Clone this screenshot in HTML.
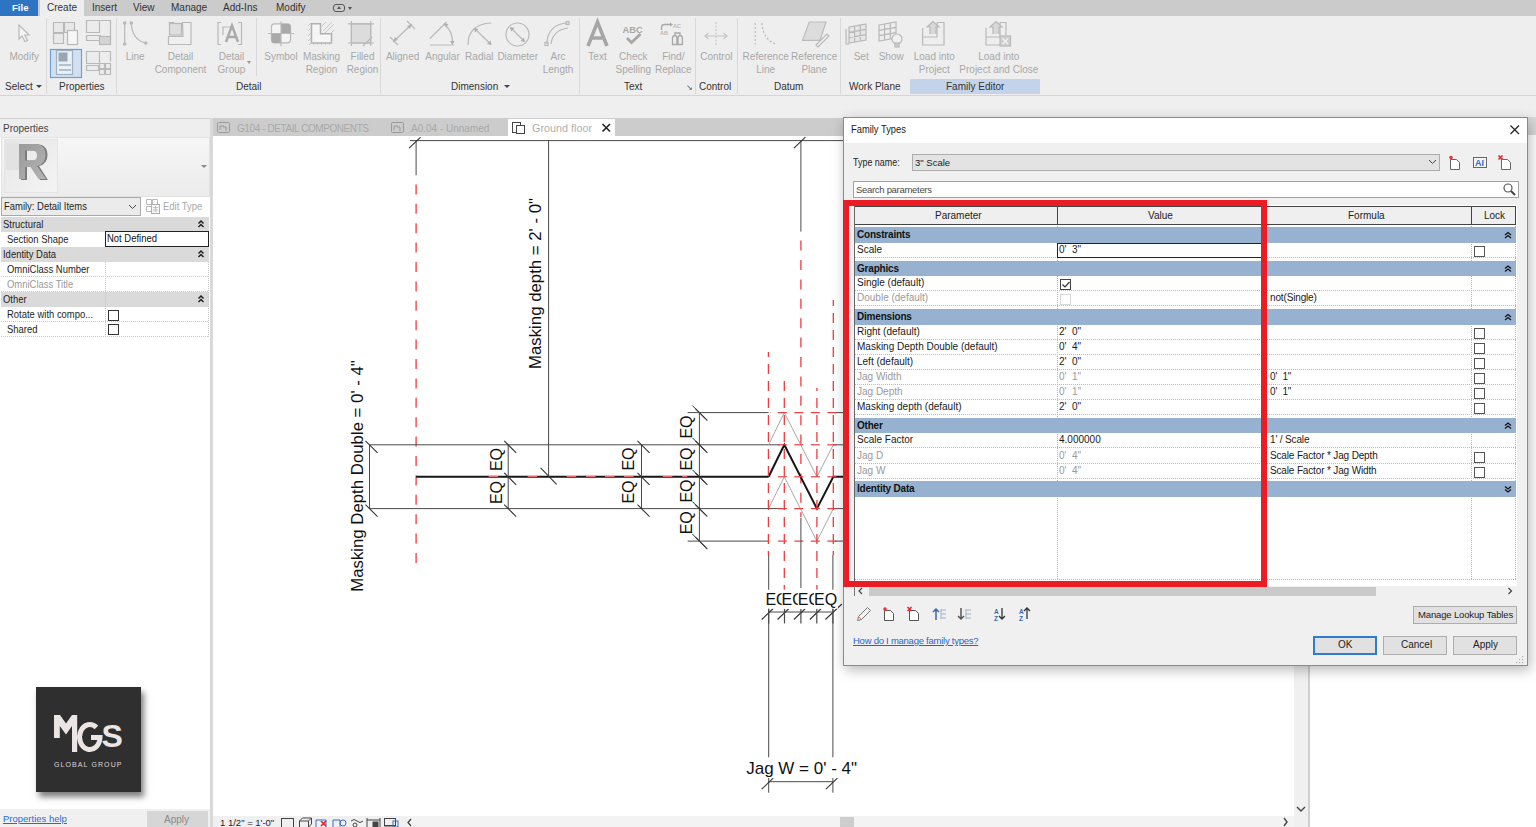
<!DOCTYPE html>
<html><head><meta charset="utf-8">
<style>
*{box-sizing:border-box;margin:0;padding:0}
html,body{width:1536px;height:827px;overflow:hidden;background:#fff;font-family:"Liberation Sans",sans-serif;position:relative}
.a{position:absolute}
.t{position:absolute;white-space:pre;line-height:12px}
.tab{position:absolute;top:2px;font-size:10px;color:#333;white-space:nowrap;line-height:12px}
.rl{position:absolute;font-size:10px;color:#a8a8a8;white-space:nowrap;line-height:12px;text-align:center}
.gl{position:absolute;font-size:10px;color:#333;white-space:nowrap;line-height:12px;top:81px}
svg{position:absolute;overflow:visible}
.pr{position:absolute;left:1px;width:208px;height:15px;font-size:10.8px;line-height:14px;color:#1e1e1e;white-space:nowrap}
.n{display:inline-block;transform:scaleX(.875);transform-origin:0 50%}
.ph{position:absolute;left:1px;width:208px;height:15px;background:#dadada;font-size:10.8px;line-height:14px;color:#1e1e1e;padding-left:2px}
.dh{position:absolute;left:855px;width:661px;height:16px;background:#97b1d0;font-size:10px;font-weight:bold;line-height:15px;color:#111;padding-left:2px;letter-spacing:-0.2px}
.dr{position:absolute;left:855px;width:661px;height:15px;font-size:10px;line-height:14px;color:#1a1a1a;white-space:nowrap;background:repeating-linear-gradient(90deg,#bcbcbc 0 1px,transparent 1px 2px) bottom/100% 1px no-repeat}
.dr span{position:absolute;top:0}
.g{color:#9a9a9a}
.cb{position:absolute;width:11px;height:11px;border:1px solid #555;background:#fff}
.chev{position:absolute;font-size:8px;line-height:8px}
</style></head><body>

<!-- top tab bar -->
<div class="a" style="left:0;top:0;width:1536px;height:16px;background:#cbcbcb"></div>
<div class="a" style="left:0;top:0;width:38px;height:16px;background:#2d74c2"></div>
<div class="tab" style="left:12px;color:#fff;font-weight:bold;font-size:9.6px">File</div>
<div class="a" style="left:40px;top:0;width:44px;height:16px;background:#eeeeee"></div>
<div class="tab" style="left:47px">Create</div>
<div class="tab" style="left:92px">Insert</div>
<div class="tab" style="left:133px">View</div>
<div class="tab" style="left:171px">Manage</div>
<div class="tab" style="left:223px">Add-Ins</div>
<div class="tab" style="left:276px">Modify</div>
<div class="a" style="left:333px;top:4px;width:12px;height:8px;border:1px solid #555;border-radius:3px"></div>
<div class="a" style="left:337px;top:6px;width:0;height:0;border-left:2px solid transparent;border-right:2px solid transparent;border-bottom:3px solid #555"></div>
<div class="a" style="left:348px;top:7px;width:0;height:0;border-left:2px solid transparent;border-right:2px solid transparent;border-top:3px solid #555"></div>
<!-- ribbon -->
<div class="a" style="left:0;top:16px;width:1536px;height:80px;background:#eeeeee;border-bottom:1px solid #d5d5d5"></div>
<div class="a" style="left:0;top:96px;width:1536px;height:22px;background:#efefef"></div>

<div class="rl" style="left:-35.8px;width:120px;top:51.0px">Modify</div>
<div class="rl" style="left:75.2px;width:120px;top:51.0px">Line</div>
<div class="rl" style="left:120.5px;width:120px;top:51.0px">Detail</div>
<div class="rl" style="left:120.5px;width:120px;top:63.5px">Component</div>
<div class="rl" style="left:171.5px;width:120px;top:51.0px">Detail</div>
<div class="rl" style="left:171.5px;width:120px;top:63.5px">Group</div>
<div class="rl" style="left:221.0px;width:120px;top:51.0px">Symbol</div>
<div class="rl" style="left:261.5px;width:120px;top:51.0px">Masking</div>
<div class="rl" style="left:261.5px;width:120px;top:63.5px">Region</div>
<div class="rl" style="left:302.5px;width:120px;top:51.0px">Filled</div>
<div class="rl" style="left:302.5px;width:120px;top:63.5px">Region</div>
<div class="rl" style="left:342.6px;width:120px;top:51.0px">Aligned</div>
<div class="rl" style="left:382.5px;width:120px;top:51.0px">Angular</div>
<div class="rl" style="left:419.3px;width:120px;top:51.0px">Radial</div>
<div class="rl" style="left:457.7px;width:120px;top:51.0px">Diameter</div>
<div class="rl" style="left:498.0px;width:120px;top:51.0px">Arc</div>
<div class="rl" style="left:498.0px;width:120px;top:63.5px">Length</div>
<div class="rl" style="left:537.5px;width:120px;top:51.0px">Text</div>
<div class="rl" style="left:573.3px;width:120px;top:51.0px">Check</div>
<div class="rl" style="left:573.3px;width:120px;top:63.5px">Spelling</div>
<div class="rl" style="left:613.3px;width:120px;top:51.0px">Find/</div>
<div class="rl" style="left:613.3px;width:120px;top:63.5px">Replace</div>
<div class="rl" style="left:656.3px;width:120px;top:51.0px">Control</div>
<div class="rl" style="left:705.7px;width:120px;top:51.0px">Reference</div>
<div class="rl" style="left:705.7px;width:120px;top:63.5px">Line</div>
<div class="rl" style="left:754.2px;width:120px;top:51.0px">Reference</div>
<div class="rl" style="left:754.2px;width:120px;top:63.5px">Plane</div>
<div class="rl" style="left:801.2px;width:120px;top:51.0px">Set</div>
<div class="rl" style="left:831.2px;width:120px;top:51.0px">Show</div>
<div class="rl" style="left:874.3px;width:120px;top:51.0px">Load into</div>
<div class="rl" style="left:874.3px;width:120px;top:63.5px">Project</div>
<div class="rl" style="left:938.8px;width:120px;top:51.0px">Load into</div>
<div class="rl" style="left:938.8px;width:120px;top:63.5px">Project and Close</div>
<svg style="left:0;top:0" width="1536" height="100" viewBox="0 0 1536 100">
<g fill="none" stroke="#b9b9b9" stroke-width="1.2">
<!-- separators -->
<g stroke="#d8d8d8" stroke-width="1"><line x1="46.5" y1="18" x2="46.5" y2="94"/><line x1="116.5" y1="18" x2="116.5" y2="94"/><line x1="256.5" y1="18" x2="256.5" y2="76"/><line x1="380.5" y1="18" x2="380.5" y2="94"/><line x1="579.5" y1="18" x2="579.5" y2="94"/><line x1="695.5" y1="18" x2="695.5" y2="94"/><line x1="737.5" y1="18" x2="737.5" y2="94"/><line x1="840.5" y1="18" x2="840.5" y2="94"/></g>
<!-- modify cursor -->
<path d="M19 25 L19 39 L22 36 L25 41.5 L27.5 40.5 L24.8 35 L29 35 Z" fill="#f4f4f4"/>
<!-- properties icons -->
<rect x="50.5" y="49.5" width="31" height="28" fill="#d2e0f2" stroke="#6e9fd8"/>
<rect x="56.5" y="50.5" width="16" height="24" fill="#e8f0f8" stroke="#9fb0c0"/>
<rect x="58.5" y="52.5" width="9" height="9" fill="#9aa6b2" stroke="none"/>
<path d="M59 65 H71 M59 70 H71" stroke="#8090a0"/>
<path d="M53.5 22.5 h10 v10 h-10z M64.5 22.5 h10 v10 h-10z M53.5 33.5 h10 v10 h-10z" fill="#e8e8e8"/>
<rect x="67.5" y="30.5" width="10" height="14" fill="#f6f6f6"/>
<path d="M86.5 20.5 h13 v12 h-13z M100.5 20.5 h10 v18 M86.5 35.5 h14 v5 h-14z" fill="#ececec"/>
<rect x="99.5" y="36.5" width="11" height="8" fill="#d4d4d4"/>
<path d="M86.5 51.5 h13 v12 h-13z M100.5 51.5 h10 v10 M86.5 65.5 h12 v5 h-12z" fill="#ececec"/>
<path d="M99.5 63.5 h5 v5 h-5z M105.5 63.5 h5 v5 h-5z M99.5 69.5 h5 v5 h-5z M105.5 69.5 h5 v5 h-5z" fill="#ececec"/>
<!-- line -->
<line x1="124.7" y1="23" x2="124.7" y2="44"/>
<circle cx="124.7" cy="23" r="1.2" fill="#b9b9b9"/><circle cx="124.7" cy="44" r="1.2" fill="#b9b9b9"/>
<path d="M131.3 23 Q132 40 145.8 43"/><circle cx="131.3" cy="23" r="1.2" fill="#b9b9b9"/><circle cx="145.8" cy="43" r="1.2" fill="#b9b9b9"/>
<!-- detail component -->
<path d="M168.5 22.5 h6 M182.5 22.5 h8.5 v22 h-22.5 v-8 h14.5 z" fill="#f0f0f0"/>
<rect x="169.5" y="23.5" width="12" height="11.5" fill="#dedede"/>
<!-- detail group -->
<path d="M221 22.5 h-3 v22 h3 M238 22.5 h3.5 v22 h-3.5 M223 35 v-8 h8 v3"/>
<path d="M226 42 L232 25.5 L238 42 M228 37 h8" stroke="#aaaaaa" stroke-width="2.4"/>
<!-- symbol -->
<rect x="271.5" y="23.8" width="19" height="19" rx="3" fill="#f4f4f4"/>
<path d="M281 24 h7 a2.5 2.5 0 0 1 2.5 2.5 v7 h-9.5z M271.5 33.5 h9.5 v9.5 h-7 a2.5 2.5 0 0 1 -2.5 -2.5z" fill="#a9a9a9" stroke="none"/>
<path d="M268 33.5 H294 M281 21.5 V46"/>
<!-- masking region -->
<path d="M311.5 23.8 h9 v10 h11 v9.2 h-20 z" fill="#f6f6f6" stroke="#b0b0b0" stroke-width="1.5"/>
<path d="M309 45 l3 -3 M313 45 l3 -3 M317 45 l3 -3 M321 45 l3 -3 M325 45 l3 -3 M329 45 l3 -3 M308 41 l3 -3 M308 36 l3 -3 M308 31 l3 -3 M308 26 l3 -3 M323 31 l9 -9 M325 33 l9 -9 M330 34 l4 -4 M322 26 l4 -4" stroke="#c4c4c4" stroke-width="0.9"/>
<!-- filled region -->
<rect x="351.4" y="23.8" width="19.3" height="19.2" fill="#dcdcdc"/>
<path d="M348 23.8 H374 M348 43 H374 M351.4 21 V46 M370.7 21 V46 M363 46 L372 37"/>
<!-- aligned -->
<path d="M393 42 L412 24 M390 37 L398 45 M407 21 L415 29"/>
<path d="M393.5 41.5 l1.5 -4.5 l3 3 z M411.5 24.5 l-1.5 4.5 l-3 -3 z" fill="#b0b0b0" stroke="none"/>
<!-- angular -->
<path d="M430 38.5 L446.5 22 M430 45 H454.3 M444.5 24.5 Q453.5 32 452.5 44"/>
<path d="M444 23.5 l4.5 0.5 l-2.5 3.5 z M452.5 45 l-2.5 -4 l4.5 0 z" fill="#b0b0b0" stroke="none"/>
<!-- radial -->
<path d="M468 45 Q468 24 491.2 23 M474.5 28.5 L491 44.5"/>
<path d="M474 28 l4.5 1 l-3.5 3.5 z M491.5 45 l-4.5 -1 l3.5 -3.5 z" fill="#b0b0b0" stroke="none"/>
<!-- diameter -->
<circle cx="517.5" cy="34.5" r="11.5"/><path d="M510.5 27.5 L524.5 41.5"/>
<path d="M510 27 l4.5 1 l-3.5 3.5 z M525 42 l-4.5 -1 l3.5 -3.5 z" fill="#b0b0b0" stroke="none"/>
<!-- arc length -->
<path d="M546.7 43.9 Q548 24 567.4 23 M551 44 Q553 30 568 28"/><rect x="566" y="21.5" width="3" height="3"/><rect x="545" y="42.5" width="3" height="3"/>
<!-- text A -->
<path d="M588 46 L597.5 22 L607 46 M591.5 38 H603.5" stroke="#a6a6a6" stroke-width="3.5"/>
<!-- check spelling -->
<text x="622.5" y="32.5" font-size="9.3" font-weight="bold" fill="#a8a8a8" stroke="none" font-family="Liberation Sans">ABC</text>
<path d="M627 38 L631.5 42.5 L640.5 34" stroke="#a8a8a8" stroke-width="2.8"/>
<!-- find replace -->
<path d="M661.5 30 v-2.5 q0 -3 3 -3 h6" stroke="#a8a8a8" stroke-width="1.3"/><path d="M670 22.5 l3 2 l-3 2 z" fill="#a8a8a8" stroke="none"/>
<text x="673" y="27.5" font-size="5.5" font-weight="bold" fill="#b8b8b8" stroke="none" font-family="Liberation Sans">AC</text>
<text x="660" y="35" font-size="5.5" font-weight="bold" fill="#b8b8b8" stroke="none" font-family="Liberation Sans">AB</text>
<path d="M672.5 44.5 v-6 q0 -3 2.2 -3 q2.2 0 2.2 3 v6 z M678 44.5 v-6 q0 -3 2.2 -3 q2.2 0 2.2 3 v6 z M675 35 v-2 h5 v2" fill="#eeeeee" stroke="#a8a8a8" stroke-width="1.3"/>
<!-- control -->
<path d="M716 22 V46" stroke="#c8c8c8" stroke-dasharray="2 1.5"/>
<path d="M705 36 H727 M723.5 33 L727 36 L723.5 39 M708.5 33 L705 36 L708.5 39" stroke="#c4c4c4" stroke-width="1.1"/>
<!-- ref line -->
<path d="M755.2 23 V44.3 M761.9 23 Q763 40 776.1 43.9" stroke-dasharray="2 2"/>
<!-- ref plane -->
<path d="M809.3 22 L826 22 L820 40.4 L802.5 40.4 Z" fill="#dcdcdc" stroke="#bcbcbc"/>
<path d="M816 45 L827 34 L829 36 L818 47 Z" fill="#f2f2f2"/>
<!-- set -->
<path d="M849 27 L866 24 V40 L849 43 Z M849 32.3 L866 29.3 M849 37.6 L866 34.6 M854.6 26 V42 M860.3 25 V41 M846 29 V44 h3" fill="#e6e6e6"/>
<!-- show -->
<path d="M879 25 L896 22 V38 L879 41 Z M879 30.3 L896 27.3 M879 35.6 L896 32.6 M884.6 24 V40 M890.3 23 V39" fill="#ececec"/>
<circle cx="897" cy="39" r="5" fill="#f0f0f0"/><rect x="895" y="43" width="4" height="4" fill="#cccccc"/>
<!-- load into project -->
<path d="M922.6 28 V45 H944 V22.5 H937" fill="none"/><path d="M930 34 V27 H927 L933 21.5 L939 27 H936 V34" fill="#d8d8d8"/><path d="M922.6 37 H937 V22.5"/>
<!-- load and close -->
<path d="M986 28 V45 H1000 M1006 22.5 V36 M986 37 H1000 V22.5 H1006" fill="none"/><path d="M993 34 V27 H990 L996 21.5 L1002 27 H999 V34" fill="#d8d8d8"/>
<rect x="1000" y="36" width="10.5" height="10" fill="#cfcfcf" stroke="#bbbbbb"/><path d="M1002.5 38.5 l5.5 5.5 M1008 38.5 l-5.5 5.5" stroke="#f4f4f4"/>
</g>
</svg>

<div class="gl" style="left:5px">Select</div>
<div class="a" style="left:36px;top:85px;border-left:3px solid transparent;border-right:3px solid transparent;border-top:3px solid #444"></div>
<div class="gl" style="left:59px">Properties</div>
<div class="gl" style="left:236px">Detail</div>
<div class="a" style="left:247px;top:61px;border-left:2.5px solid transparent;border-right:2.5px solid transparent;border-top:3px solid #999"></div>
<div class="gl" style="left:451px">Dimension</div>
<div class="a" style="left:504px;top:85px;border-left:3px solid transparent;border-right:3px solid transparent;border-top:3px solid #444"></div>
<div class="gl" style="left:624px">Text</div>
<div class="t" style="left:686px;top:82px;font-size:8px;color:#555">&#8600;</div>
<div class="gl" style="left:699px">Control</div>
<div class="gl" style="left:774px">Datum</div>
<div class="gl" style="left:849px">Work Plane</div>
<div class="a" style="left:910px;top:79px;width:130px;height:15px;background:#c5d3ea"></div>
<div class="gl" style="left:946px">Family Editor</div>

<!-- properties panel -->
<div class="a" style="left:0;top:118px;width:211px;height:709px;background:#fff"></div>
<div class="a" style="left:0;top:118px;width:211px;height:1px;background:#cfcfcf"></div>
<div class="a" style="left:0;top:119px;width:211px;height:18px;background:#eeeeee"></div>
<div class="t" style="left:3px;top:123px;font-size:10px;color:#444">Properties</div>
<div class="a" style="left:1px;top:137px;width:209px;height:60px;background:linear-gradient(#f6f6f6,#ececec);border:1px solid #e2e2e2"></div>
<div class="a" style="left:4px;top:139px;width:54px;height:54px;background:linear-gradient(135deg,#e6e6e6,#f4f4f4);border:1px solid #e4e4e4"></div>
<svg style="left:0;top:0" width="60" height="200">
<defs><linearGradient id="rg" x1="0" y1="0" x2="1" y2="1"><stop offset="0" stop-color="#9a9a9a"/><stop offset="1" stop-color="#b4b4b4"/></linearGradient></defs>
<rect x="6" y="143" width="14" height="27" fill="#e2e2e2"/>
<path d="M21 180 V144 H35 Q47.5 144 47.5 155 Q47.5 164 39 166 L48 180 H40 L32 167 H27 V180 Z M27 150.5 V160.5 H34 Q39 160.5 39 155.5 Q39 150.5 34 150.5 Z" fill="#7c7c7c" fill-rule="evenodd"/>
<path d="M19 179 V144 H34 Q45.5 144 45.5 155 Q45.5 164 37 166 L46 179 H38.5 L30.5 167 H25 V179 Z M25 150.5 V160.5 H32 Q37 160.5 37 155.5 Q37 150.5 32 150.5 Z" fill="url(#rg)" fill-rule="evenodd"/>
</svg>
<div class="a" style="left:201px;top:165px;border-left:3px solid transparent;border-right:3px solid transparent;border-top:3px solid #888"></div>
<div class="a" style="left:1px;top:197px;width:140px;height:19px;background:#ebebeb;border:1px solid #a9a9a9"></div>
<div class="t" style="left:4px;top:200px;font-size:10.8px;color:#1e1e1e"><span class="n">Family: Detail Items</span></div>
<svg style="left:0;top:0" width="211" height="230"><path d="M129 205 L132.5 208.5 L136 205" fill="none" stroke="#444" stroke-width="1"/>
<path d="M146.5 199.5 h5 v5 h-5z M146.5 206.5 h5 v5 h-5z M152.5 199.5 h5 v5 h-5z" fill="none" stroke="#b8b8b8"/><rect x="151.5" y="204.5" width="8" height="9" fill="#f4f4f4" stroke="#b0b0b0"/><path d="M153 207.5 h5 M153 210 h5 M155.5 206 v6" stroke="#c0c0c0"/></svg>
<div class="t" style="left:163px;top:200px;font-size:10.8px;color:#a8a8a8"><span class="n">Edit Type</span></div>
<div class="ph" style="top:217px"><span class="n">Structural</span></div>
<div class="pr" style="top:232px"><span class="n" style="position:absolute;left:6px">Section Shape</span></div>
<div class="a" style="left:105px;top:231px;width:104px;height:16px;border:1px solid #222;background:#fff"></div>
<div class="t" style="left:107px;top:232px;font-size:10.8px;color:#111"><span class="n">Not Defined</span></div>
<div class="ph" style="top:247px"><span class="n">Identity Data</span></div>
<div class="pr" style="top:262px"><span class="n" style="position:absolute;left:6px">OmniClass Number</span></div>
<div class="pr" style="top:277px;color:#999"><span class="n" style="position:absolute;left:6px">OmniClass Title</span></div>
<div class="ph" style="top:292px"><span class="n">Other</span></div>
<div class="pr" style="top:307px"><span class="n" style="position:absolute;left:6px">Rotate with compo...</span></div>
<div class="pr" style="top:322px"><span class="n" style="position:absolute;left:6px">Shared</span></div>
<svg style="left:0;top:0" width="211" height="340">
<g fill="none" stroke="#c8c8c8" stroke-dasharray="1 1">
<path d="M105.5 262 V337 M208.5 262 V337 M1 276.5 H209 M1 291.5 H209 M1 321.5 H209 M1 336.5 H209"/>
</g>
<rect x="108.5" y="310.5" width="10" height="10" fill="#fff" stroke="#333"/>
<rect x="108.5" y="324.5" width="10" height="10" fill="#fff" stroke="#333"/>
<g fill="none" stroke="#222" stroke-width="1.5"><path d="M198.5 223.5 L201 221 L203.5 223.5 M198.5 227 L201 224.5 L203.5 227 M198.5 253.5 L201 251 L203.5 253.5 M198.5 257 L201 254.5 L203.5 257 M198.5 298.5 L201 296 L203.5 298.5 M198.5 302 L201 299.5 L203.5 302"/></g>
</svg>
<!-- panel separator -->
<div class="a" style="left:210px;top:118px;width:3px;height:709px;background:#d9d9d9"></div>
<!-- MGS logo -->
<div class="a" style="left:36px;top:687px;width:105px;height:105px;background:#2f2f2f;box-shadow:3px 5px 6px rgba(0,0,0,0.5)"></div>
<svg style="left:0;top:0" width="211" height="827">
<path d="M54 715 L60 715 L66 723.5 L72 715 L77.2 715 L77.2 752 L72 752 L72 726 L66 734.5 L59.8 726 L59.8 738 L54 738 Z" fill="#ebe5e3"/>
<path d="M96.4 727.5 A 10.2 12.5 0 1 0 100 737.5 H 91" fill="none" stroke="#ebe5e3" stroke-width="5"/>
<text x="101.5" y="746.8" font-family="Liberation Sans" font-weight="bold" font-size="32" fill="#ebe5e3">S</text>
<text x="54" y="767" font-family="Liberation Sans" font-size="7" fill="#ddd6d4" letter-spacing="1.1">GLOBAL GROUP</text>
</svg>
<!-- bottom bar -->
<div class="a" style="left:0;top:809px;width:210px;height:18px;background:#f0f0f0"></div>
<div class="t" style="left:3px;top:813px;font-size:9.5px;color:#1a6fd0;text-decoration:underline">Properties help</div>
<div class="a" style="left:147px;top:811px;width:61px;height:16px;background:#d6d6d6"></div>
<div class="t" style="left:164px;top:814px;font-size:10px;color:#8a8a8a">Apply</div>

<!-- canvas -->
<div class="a" style="left:213px;top:118px;width:1097px;height:18px;background:#cccccc"></div>
<div class="a" style="left:508px;top:119px;width:107px;height:17px;background:#fff"></div>
<div class="t" style="left:237px;top:123px;font-size:10px;color:#a9a9a9;letter-spacing:-0.42px">G104 - DETAIL COMPONENTS</div>
<div class="t" style="left:411px;top:123px;font-size:10px;color:#a9a9a9">A0.04 - Unnamed</div>
<div class="t" style="left:532px;top:122px;font-size:10.8px;color:#b0b0b0">Ground floor</div>
<svg style="left:0;top:0" width="1536" height="827">
<g fill="none" stroke="#9a9a9a" stroke-width="1">
<rect x="217.5" y="122.5" width="12" height="10" rx="1"/><path d="M220 130 v-4 h4 M223 127 h3 v4"/>
<rect x="391.5" y="122.5" width="12" height="10" rx="1"/><path d="M394 130 v-4 h4 M397 127 h3 v4"/>
</g>
<g fill="none" stroke="#444" stroke-width="1"><rect x="512.5" y="122.5" width="8" height="10"/><rect x="516.5" y="125.5" width="8" height="8" fill="#fff"/></g>
<path d="M602.5 124 L610 131.5 M610 124 L602.5 131.5" stroke="#222" stroke-width="1.6"/>
</svg>
<div class="a" style="left:213px;top:136px;width:1081px;height:681px;background:#fff"></div>
<!-- vertical scrollbar -->
<div class="a" style="left:1294px;top:136px;width:14px;height:691px;background:#f0f0f0"></div>
<div class="a" style="left:1308px;top:118px;width:2px;height:709px;background:#cfcfcf"></div>
<div class="a" style="left:1311px;top:118px;width:225px;height:709px;background:#fff"></div>
<div class="a" style="left:1311px;top:117px;width:225px;height:18px;background:#d9d9d9"></div>
<!-- status bar -->
<div class="a" style="left:213px;top:816px;width:1081px;height:11px;background:#f0f0f0"></div>
<div class="a" style="left:407px;top:816px;width:887px;height:11px;background:#f3f3f3"></div>
<div class="a" style="left:840px;top:817px;width:14px;height:10px;background:#cdcdcd"></div>
<div class="t" style="left:220px;top:817px;font-size:9.5px;color:#222">1 1/2" = 1'-0"</div>
<svg style="left:0;top:0" width="1536" height="827">
<g fill="none" stroke="#444" stroke-width="1">
<rect x="281.5" y="818.5" width="12" height="9"/>
<path d="M299.5 827 v-6 l3 -3 h9 v6 l-3 3 M299.5 821 h9 l3 -3 M308.5 821 v6"/>
<path d="M316 827 v-7 h10 v7" stroke="#3a6fc0"/><path d="M321 821 l5 5 M326 821 l-5 5" stroke="#e02020" stroke-width="1.5"/>
<path d="M333 827 v-7 h7 v7" stroke="#3a6fc0"/><circle cx="343" cy="823" r="3" stroke="#3a6fc0"/>
<path d="M351 821 q3 -3 6 0 q3 3 6 0 M353 825 a2 2 0 1 0 4 0 a2 2 0 1 0 -4 0"/>
<path d="M367 818 v9 M380 818 v9 M367 820 h13"/><rect x="373" y="822" width="5" height="5" fill="#444"/>
<rect x="384.5" y="818.5" width="11" height="7"/><path d="M384 826 h12"/><rect x="393" y="821" width="5" height="6" stroke="#3a6fc0"/>
<path d="M411 819 l-3 3.5 l3 3.5" stroke-width="1.3"/>
</g>
<path d="M1284 818 l3 4 l-3 4" fill="none" stroke="#444" stroke-width="1.4"/>
<path d="M1297 807 l4 4 l4 -4" fill="none" stroke="#444" stroke-width="1.4"/>
</svg>

<svg style="left:0;top:0" width="1536" height="827"><line x1="410" y1="140.6" x2="843" y2="140.6" stroke="#4a4a4a" stroke-width="1"/>
<line x1="416.1" y1="140.6" x2="416.1" y2="175.3" stroke="#4a4a4a" stroke-width="1"/>
<line x1="409.1" y1="148.1" x2="420.6" y2="137.1" stroke="#333" stroke-width="1.1"/>
<line x1="800.9" y1="140.6" x2="800.9" y2="231.6" stroke="#4a4a4a" stroke-width="1"/>
<line x1="793.9" y1="148.1" x2="805.4" y2="137.1" stroke="#333" stroke-width="1.1"/>
<line x1="548.6" y1="140.6" x2="548.6" y2="476.8" stroke="#4a4a4a" stroke-width="1"/>
<line x1="416.1" y1="184.4" x2="416.1" y2="194.4" stroke="#ef3a3f" stroke-width="1.3"/>
<line x1="416.1" y1="203.8" x2="416.1" y2="213.8" stroke="#ef3a3f" stroke-width="1.3"/>
<line x1="416.1" y1="223.2" x2="416.1" y2="233.2" stroke="#ef3a3f" stroke-width="1.3"/>
<line x1="416.1" y1="242.6" x2="416.1" y2="252.6" stroke="#ef3a3f" stroke-width="1.3"/>
<line x1="416.1" y1="262.0" x2="416.1" y2="272.0" stroke="#ef3a3f" stroke-width="1.3"/>
<line x1="416.1" y1="281.4" x2="416.1" y2="291.4" stroke="#ef3a3f" stroke-width="1.3"/>
<line x1="416.1" y1="300.8" x2="416.1" y2="310.8" stroke="#ef3a3f" stroke-width="1.3"/>
<line x1="416.1" y1="320.2" x2="416.1" y2="330.2" stroke="#ef3a3f" stroke-width="1.3"/>
<line x1="416.1" y1="339.6" x2="416.1" y2="349.6" stroke="#ef3a3f" stroke-width="1.3"/>
<line x1="416.1" y1="359.0" x2="416.1" y2="369.0" stroke="#ef3a3f" stroke-width="1.3"/>
<line x1="416.1" y1="378.4" x2="416.1" y2="388.4" stroke="#ef3a3f" stroke-width="1.3"/>
<line x1="416.1" y1="397.8" x2="416.1" y2="407.8" stroke="#ef3a3f" stroke-width="1.3"/>
<line x1="416.1" y1="417.2" x2="416.1" y2="427.2" stroke="#ef3a3f" stroke-width="1.3"/>
<line x1="416.1" y1="436.6" x2="416.1" y2="446.6" stroke="#ef3a3f" stroke-width="1.3"/>
<line x1="416.1" y1="456.0" x2="416.1" y2="466.0" stroke="#ef3a3f" stroke-width="1.3"/>
<line x1="416.1" y1="475.4" x2="416.1" y2="485.4" stroke="#ef3a3f" stroke-width="1.3"/>
<line x1="416.1" y1="494.8" x2="416.1" y2="504.8" stroke="#ef3a3f" stroke-width="1.3"/>
<line x1="416.1" y1="514.2" x2="416.1" y2="524.2" stroke="#ef3a3f" stroke-width="1.3"/>
<line x1="416.1" y1="533.6" x2="416.1" y2="543.6" stroke="#ef3a3f" stroke-width="1.3"/>
<line x1="416.1" y1="553.0" x2="416.1" y2="563.0" stroke="#ef3a3f" stroke-width="1.3"/>
<line x1="800.9" y1="240.6" x2="800.9" y2="250.6" stroke="#ef3a3f" stroke-width="1.3"/>
<line x1="800.9" y1="260.0" x2="800.9" y2="270.0" stroke="#ef3a3f" stroke-width="1.3"/>
<line x1="800.9" y1="279.4" x2="800.9" y2="289.4" stroke="#ef3a3f" stroke-width="1.3"/>
<line x1="800.9" y1="298.8" x2="800.9" y2="308.8" stroke="#ef3a3f" stroke-width="1.3"/>
<line x1="800.9" y1="318.2" x2="800.9" y2="328.2" stroke="#ef3a3f" stroke-width="1.3"/>
<line x1="800.9" y1="337.6" x2="800.9" y2="347.6" stroke="#ef3a3f" stroke-width="1.3"/>
<line x1="800.9" y1="357.0" x2="800.9" y2="367.0" stroke="#ef3a3f" stroke-width="1.3"/>
<line x1="800.9" y1="376.4" x2="800.9" y2="386.4" stroke="#ef3a3f" stroke-width="1.3"/>
<line x1="800.9" y1="395.8" x2="800.9" y2="405.8" stroke="#ef3a3f" stroke-width="1.3"/>
<line x1="800.9" y1="415.2" x2="800.9" y2="425.2" stroke="#ef3a3f" stroke-width="1.3"/>
<line x1="800.9" y1="434.6" x2="800.9" y2="444.6" stroke="#ef3a3f" stroke-width="1.3"/>
<line x1="800.9" y1="454.0" x2="800.9" y2="464.0" stroke="#ef3a3f" stroke-width="1.3"/>
<line x1="800.9" y1="473.4" x2="800.9" y2="483.4" stroke="#ef3a3f" stroke-width="1.3"/>
<line x1="800.9" y1="492.8" x2="800.9" y2="502.8" stroke="#ef3a3f" stroke-width="1.3"/>
<line x1="800.9" y1="512.2" x2="800.9" y2="517.0" stroke="#ef3a3f" stroke-width="1.3"/>
<line x1="369.5" y1="444.8" x2="369.5" y2="508.6" stroke="#4a4a4a" stroke-width="1"/>
<line x1="365.5" y1="440.8" x2="377.5" y2="452.8" stroke="#333" stroke-width="1.1"/>
<line x1="365.5" y1="504.6" x2="377.5" y2="516.6" stroke="#333" stroke-width="1.1"/>
<line x1="369.5" y1="444.8" x2="779.8" y2="444.8" stroke="#4a4a4a" stroke-width="1"/>
<line x1="369.5" y1="508.6" x2="779.8" y2="508.6" stroke="#4a4a4a" stroke-width="1"/>
<line x1="416.1" y1="476.8" x2="768.6" y2="476.8" stroke="#161616" stroke-width="2"/>
<line x1="488.6" y1="476.5" x2="498.1" y2="476.5" stroke="#f06a6a" stroke-width="1"/>
<line x1="527.7" y1="476.5" x2="537.2" y2="476.5" stroke="#f06a6a" stroke-width="1"/>
<line x1="566.7" y1="476.5" x2="576.2" y2="476.5" stroke="#f06a6a" stroke-width="1"/>
<line x1="586" y1="476.5" x2="595.5" y2="476.5" stroke="#f06a6a" stroke-width="1"/>
<line x1="605" y1="476.5" x2="614.5" y2="476.5" stroke="#f06a6a" stroke-width="1"/>
<line x1="624" y1="476.5" x2="633.5" y2="476.5" stroke="#f06a6a" stroke-width="1"/>
<line x1="662.8" y1="476.5" x2="672.3" y2="476.5" stroke="#f06a6a" stroke-width="1"/>
<line x1="682.3" y1="476.5" x2="687.3" y2="476.5" stroke="#f06a6a" stroke-width="1"/>
<line x1="508.2" y1="444.8" x2="508.2" y2="508.6" stroke="#4a4a4a" stroke-width="1"/>
<line x1="504.2" y1="440.8" x2="516.2" y2="452.8" stroke="#333" stroke-width="1.1"/>
<line x1="504.2" y1="472.8" x2="516.2" y2="484.8" stroke="#333" stroke-width="1.1"/>
<line x1="504.2" y1="504.6" x2="516.2" y2="516.6" stroke="#333" stroke-width="1.1"/>
<line x1="540.6" y1="467.8" x2="556.6" y2="484.40000000000003" stroke="#333" stroke-width="1.1"/>
<line x1="641.5" y1="444.8" x2="641.5" y2="508.6" stroke="#4a4a4a" stroke-width="1"/>
<line x1="637.5" y1="440.8" x2="649.5" y2="452.8" stroke="#333" stroke-width="1.1"/>
<line x1="637.5" y1="472.8" x2="649.5" y2="484.8" stroke="#333" stroke-width="1.1"/>
<line x1="637.5" y1="504.6" x2="649.5" y2="516.6" stroke="#333" stroke-width="1.1"/>
<line x1="699.4" y1="412.6" x2="699.4" y2="541.1" stroke="#4a4a4a" stroke-width="1"/>
<line x1="695.4" y1="408.6" x2="707.4" y2="420.6" stroke="#333" stroke-width="1.1"/>
<line x1="692.4" y1="405.6" x2="705.4" y2="418.6" stroke="#333" stroke-width="1"/>
<line x1="695.4" y1="440.8" x2="707.4" y2="452.8" stroke="#333" stroke-width="1.1"/>
<line x1="692.4" y1="437.8" x2="705.4" y2="450.8" stroke="#333" stroke-width="1"/>
<line x1="695.4" y1="472.8" x2="707.4" y2="484.8" stroke="#333" stroke-width="1.1"/>
<line x1="692.4" y1="469.8" x2="705.4" y2="482.8" stroke="#333" stroke-width="1"/>
<line x1="695.4" y1="504.6" x2="707.4" y2="516.6" stroke="#333" stroke-width="1.1"/>
<line x1="692.4" y1="501.6" x2="705.4" y2="514.6" stroke="#333" stroke-width="1"/>
<line x1="695.4" y1="537.1" x2="707.4" y2="549.1" stroke="#333" stroke-width="1.1"/>
<line x1="692.4" y1="534.1" x2="705.4" y2="547.1" stroke="#333" stroke-width="1"/>
<line x1="687.6" y1="412.6" x2="768.6" y2="412.6" stroke="#4a4a4a" stroke-width="1"/>
<line x1="687.6" y1="541.1" x2="768.6" y2="541.1" stroke="#4a4a4a" stroke-width="1"/>
<line x1="834.7" y1="412.6" x2="843" y2="412.6" stroke="#4a4a4a" stroke-width="1"/>
<line x1="834.7" y1="541.1" x2="843" y2="541.1" stroke="#4a4a4a" stroke-width="1"/>
<line x1="833.3" y1="444.8" x2="843" y2="444.8" stroke="#4a4a4a" stroke-width="1"/>
<line x1="833.3" y1="508.6" x2="843" y2="508.6" stroke="#4a4a4a" stroke-width="1"/>
<polyline points="768.6,444.8 784.3,412.6 816.9,476.8 833.3,444.8" fill="none" stroke="#a8a8a8" stroke-width="1"/>
<polyline points="768.6,508.6 784.3,476.8 816.9,541.1 833.3,508.6" fill="none" stroke="#a8a8a8" stroke-width="1"/>
<polyline points="768.6,476.8 784.3,444.8 816.9,508.6 833.3,476.8 843,476.8" fill="none" stroke="#161616" stroke-width="2"/>
<line x1="768.4" y1="352.0" x2="768.4" y2="357.0" stroke="#ef3a3f" stroke-width="1.3"/>
<line x1="768.4" y1="364.0" x2="768.4" y2="374.0" stroke="#ef3a3f" stroke-width="1.3"/>
<line x1="768.4" y1="381.0" x2="768.4" y2="391.0" stroke="#ef3a3f" stroke-width="1.3"/>
<line x1="768.4" y1="398.0" x2="768.4" y2="408.0" stroke="#ef3a3f" stroke-width="1.3"/>
<line x1="768.4" y1="415.0" x2="768.4" y2="425.0" stroke="#ef3a3f" stroke-width="1.3"/>
<line x1="768.4" y1="432.0" x2="768.4" y2="442.0" stroke="#ef3a3f" stroke-width="1.3"/>
<line x1="768.4" y1="449.0" x2="768.4" y2="459.0" stroke="#ef3a3f" stroke-width="1.3"/>
<line x1="768.4" y1="466.0" x2="768.4" y2="476.0" stroke="#ef3a3f" stroke-width="1.3"/>
<line x1="768.4" y1="483.0" x2="768.4" y2="493.0" stroke="#ef3a3f" stroke-width="1.3"/>
<line x1="768.4" y1="500.0" x2="768.4" y2="510.0" stroke="#ef3a3f" stroke-width="1.3"/>
<line x1="768.4" y1="517.0" x2="768.4" y2="527.0" stroke="#ef3a3f" stroke-width="1.3"/>
<line x1="768.4" y1="534.0" x2="768.4" y2="544.0" stroke="#ef3a3f" stroke-width="1.3"/>
<line x1="768.4" y1="551.0" x2="768.4" y2="555.0" stroke="#ef3a3f" stroke-width="1.3"/>
<line x1="784.3" y1="381.0" x2="784.3" y2="391.0" stroke="#ef3a3f" stroke-width="1.3"/>
<line x1="784.3" y1="398.0" x2="784.3" y2="408.0" stroke="#ef3a3f" stroke-width="1.3"/>
<line x1="784.3" y1="415.0" x2="784.3" y2="425.0" stroke="#ef3a3f" stroke-width="1.3"/>
<line x1="784.3" y1="432.0" x2="784.3" y2="442.0" stroke="#ef3a3f" stroke-width="1.3"/>
<line x1="784.3" y1="449.0" x2="784.3" y2="459.0" stroke="#ef3a3f" stroke-width="1.3"/>
<line x1="784.3" y1="466.0" x2="784.3" y2="476.0" stroke="#ef3a3f" stroke-width="1.3"/>
<line x1="784.3" y1="483.0" x2="784.3" y2="493.0" stroke="#ef3a3f" stroke-width="1.3"/>
<line x1="784.3" y1="500.0" x2="784.3" y2="510.0" stroke="#ef3a3f" stroke-width="1.3"/>
<line x1="784.3" y1="517.0" x2="784.3" y2="527.0" stroke="#ef3a3f" stroke-width="1.3"/>
<line x1="784.3" y1="534.0" x2="784.3" y2="544.0" stroke="#ef3a3f" stroke-width="1.3"/>
<line x1="784.3" y1="551.0" x2="784.3" y2="561.0" stroke="#ef3a3f" stroke-width="1.3"/>
<line x1="784.3" y1="568.0" x2="784.3" y2="578.0" stroke="#ef3a3f" stroke-width="1.3"/>
<line x1="784.3" y1="585.0" x2="784.3" y2="590.0" stroke="#ef3a3f" stroke-width="1.3"/>
<line x1="816.9" y1="388.0" x2="816.9" y2="391.0" stroke="#ef3a3f" stroke-width="1.3"/>
<line x1="816.9" y1="398.0" x2="816.9" y2="408.0" stroke="#ef3a3f" stroke-width="1.3"/>
<line x1="816.9" y1="415.0" x2="816.9" y2="425.0" stroke="#ef3a3f" stroke-width="1.3"/>
<line x1="816.9" y1="432.0" x2="816.9" y2="442.0" stroke="#ef3a3f" stroke-width="1.3"/>
<line x1="816.9" y1="449.0" x2="816.9" y2="459.0" stroke="#ef3a3f" stroke-width="1.3"/>
<line x1="816.9" y1="466.0" x2="816.9" y2="476.0" stroke="#ef3a3f" stroke-width="1.3"/>
<line x1="816.9" y1="483.0" x2="816.9" y2="493.0" stroke="#ef3a3f" stroke-width="1.3"/>
<line x1="816.9" y1="500.0" x2="816.9" y2="510.0" stroke="#ef3a3f" stroke-width="1.3"/>
<line x1="816.9" y1="517.0" x2="816.9" y2="527.0" stroke="#ef3a3f" stroke-width="1.3"/>
<line x1="816.9" y1="534.0" x2="816.9" y2="544.0" stroke="#ef3a3f" stroke-width="1.3"/>
<line x1="816.9" y1="551.0" x2="816.9" y2="561.0" stroke="#ef3a3f" stroke-width="1.3"/>
<line x1="816.9" y1="568.0" x2="816.9" y2="578.0" stroke="#ef3a3f" stroke-width="1.3"/>
<line x1="816.9" y1="585.0" x2="816.9" y2="590.0" stroke="#ef3a3f" stroke-width="1.3"/>
<line x1="833.3" y1="300.0" x2="833.3" y2="306.0" stroke="#ef3a3f" stroke-width="1.3"/>
<line x1="833.3" y1="313.0" x2="833.3" y2="323.0" stroke="#ef3a3f" stroke-width="1.3"/>
<line x1="833.3" y1="330.0" x2="833.3" y2="340.0" stroke="#ef3a3f" stroke-width="1.3"/>
<line x1="833.3" y1="347.0" x2="833.3" y2="357.0" stroke="#ef3a3f" stroke-width="1.3"/>
<line x1="833.3" y1="364.0" x2="833.3" y2="374.0" stroke="#ef3a3f" stroke-width="1.3"/>
<line x1="833.3" y1="381.0" x2="833.3" y2="391.0" stroke="#ef3a3f" stroke-width="1.3"/>
<line x1="833.3" y1="398.0" x2="833.3" y2="408.0" stroke="#ef3a3f" stroke-width="1.3"/>
<line x1="833.3" y1="415.0" x2="833.3" y2="425.0" stroke="#ef3a3f" stroke-width="1.3"/>
<line x1="833.3" y1="432.0" x2="833.3" y2="442.0" stroke="#ef3a3f" stroke-width="1.3"/>
<line x1="833.3" y1="449.0" x2="833.3" y2="459.0" stroke="#ef3a3f" stroke-width="1.3"/>
<line x1="833.3" y1="466.0" x2="833.3" y2="476.0" stroke="#ef3a3f" stroke-width="1.3"/>
<line x1="833.3" y1="483.0" x2="833.3" y2="493.0" stroke="#ef3a3f" stroke-width="1.3"/>
<line x1="833.3" y1="500.0" x2="833.3" y2="510.0" stroke="#ef3a3f" stroke-width="1.3"/>
<line x1="833.3" y1="517.0" x2="833.3" y2="527.0" stroke="#ef3a3f" stroke-width="1.3"/>
<line x1="833.3" y1="534.0" x2="833.3" y2="544.0" stroke="#ef3a3f" stroke-width="1.3"/>
<line x1="833.3" y1="551.0" x2="833.3" y2="555.0" stroke="#ef3a3f" stroke-width="1.3"/>
<line x1="770.0" y1="412.6" x2="770.3" y2="412.6" stroke="#ef3a3f" stroke-width="1.2"/>
<line x1="777.8" y1="412.6" x2="786.8" y2="412.6" stroke="#ef3a3f" stroke-width="1.2"/>
<line x1="794.3" y1="412.6" x2="803.3" y2="412.6" stroke="#ef3a3f" stroke-width="1.2"/>
<line x1="810.8" y1="412.6" x2="819.8" y2="412.6" stroke="#ef3a3f" stroke-width="1.2"/>
<line x1="827.3" y1="412.6" x2="836.3" y2="412.6" stroke="#ef3a3f" stroke-width="1.2"/>
<line x1="770.0" y1="444.8" x2="770.3" y2="444.8" stroke="#ef3a3f" stroke-width="1.2"/>
<line x1="777.8" y1="444.8" x2="786.8" y2="444.8" stroke="#ef3a3f" stroke-width="1.2"/>
<line x1="794.3" y1="444.8" x2="803.3" y2="444.8" stroke="#ef3a3f" stroke-width="1.2"/>
<line x1="810.8" y1="444.8" x2="819.8" y2="444.8" stroke="#ef3a3f" stroke-width="1.2"/>
<line x1="827.3" y1="444.8" x2="836.3" y2="444.8" stroke="#ef3a3f" stroke-width="1.2"/>
<line x1="770.0" y1="476.8" x2="770.3" y2="476.8" stroke="#ef3a3f" stroke-width="1.2"/>
<line x1="777.8" y1="476.8" x2="786.8" y2="476.8" stroke="#ef3a3f" stroke-width="1.2"/>
<line x1="794.3" y1="476.8" x2="803.3" y2="476.8" stroke="#ef3a3f" stroke-width="1.2"/>
<line x1="810.8" y1="476.8" x2="819.8" y2="476.8" stroke="#ef3a3f" stroke-width="1.2"/>
<line x1="827.3" y1="476.8" x2="836.3" y2="476.8" stroke="#ef3a3f" stroke-width="1.2"/>
<line x1="770.0" y1="508.6" x2="770.3" y2="508.6" stroke="#ef3a3f" stroke-width="1.2"/>
<line x1="777.8" y1="508.6" x2="786.8" y2="508.6" stroke="#ef3a3f" stroke-width="1.2"/>
<line x1="794.3" y1="508.6" x2="803.3" y2="508.6" stroke="#ef3a3f" stroke-width="1.2"/>
<line x1="810.8" y1="508.6" x2="819.8" y2="508.6" stroke="#ef3a3f" stroke-width="1.2"/>
<line x1="827.3" y1="508.6" x2="836.3" y2="508.6" stroke="#ef3a3f" stroke-width="1.2"/>
<line x1="770.0" y1="541.1" x2="770.3" y2="541.1" stroke="#ef3a3f" stroke-width="1.2"/>
<line x1="777.8" y1="541.1" x2="786.8" y2="541.1" stroke="#ef3a3f" stroke-width="1.2"/>
<line x1="794.3" y1="541.1" x2="803.3" y2="541.1" stroke="#ef3a3f" stroke-width="1.2"/>
<line x1="810.8" y1="541.1" x2="819.8" y2="541.1" stroke="#ef3a3f" stroke-width="1.2"/>
<line x1="827.3" y1="541.1" x2="836.3" y2="541.1" stroke="#ef3a3f" stroke-width="1.2"/>
<line x1="768.7" y1="555" x2="768.7" y2="757.3" stroke="#4a4a4a" stroke-width="1"/>
<line x1="832.9" y1="555" x2="832.9" y2="757.3" stroke="#4a4a4a" stroke-width="1"/>
<line x1="800.9" y1="517.7" x2="800.9" y2="588" stroke="#4a4a4a" stroke-width="1"/>
<line x1="768.7" y1="776.9" x2="768.7" y2="792.7" stroke="#4a4a4a" stroke-width="1"/>
<line x1="832.9" y1="776.9" x2="832.9" y2="792.7" stroke="#4a4a4a" stroke-width="1"/>
<line x1="768.7" y1="612" x2="832.9" y2="612" stroke="#4a4a4a" stroke-width="1"/>
<line x1="761.7" y1="619.5" x2="773.2" y2="608.5" stroke="#333" stroke-width="1.1"/>
<line x1="768.7" y1="604" x2="768.7" y2="623.4" stroke="#4a4a4a" stroke-width="1.2"/>
<line x1="777.5" y1="619.5" x2="789.0" y2="608.5" stroke="#333" stroke-width="1.1"/>
<line x1="784.5" y1="604" x2="784.5" y2="623.4" stroke="#4a4a4a" stroke-width="1.2"/>
<line x1="793.9" y1="619.5" x2="805.4" y2="608.5" stroke="#333" stroke-width="1.1"/>
<line x1="800.9" y1="604" x2="800.9" y2="623.4" stroke="#4a4a4a" stroke-width="1.2"/>
<line x1="809.8" y1="619.5" x2="821.3" y2="608.5" stroke="#333" stroke-width="1.1"/>
<line x1="816.8" y1="604" x2="816.8" y2="623.4" stroke="#4a4a4a" stroke-width="1.2"/>
<line x1="825.4" y1="619.5" x2="841.9" y2="604" stroke="#333" stroke-width="1.1"/>
<line x1="832.9" y1="604" x2="832.9" y2="623.4" stroke="#4a4a4a" stroke-width="1.2"/>
<line x1="768.7" y1="781.7" x2="832.9" y2="781.7" stroke="#4a4a4a" stroke-width="1"/>
<line x1="761.7" y1="789.2" x2="773.2" y2="778.2" stroke="#333" stroke-width="1.1"/>
<line x1="825.9" y1="789.2" x2="837.4" y2="778.2" stroke="#333" stroke-width="1.1"/></svg>
<svg style="left:0;top:0" width="1536" height="827" font-family="Liberation Sans"><text transform="translate(363.2,476) rotate(-90)" text-anchor="middle" font-size="16.8" fill="#111">Masking Depth Double = 0' - 4&quot;</text>
<text transform="translate(540.8,283.5) rotate(-90)" text-anchor="middle" font-size="16.8" fill="#111">Masking depth = 2' - 0&quot;</text>
<text transform="translate(501.5,459.5) rotate(-90)" text-anchor="middle" font-size="16" fill="#111">EQ</text>
<text transform="translate(501.5,492.5) rotate(-90)" text-anchor="middle" font-size="16" fill="#111">EQ</text>
<text transform="translate(633.5,459) rotate(-90)" text-anchor="middle" font-size="16" fill="#111">EQ</text>
<text transform="translate(633.5,492) rotate(-90)" text-anchor="middle" font-size="16" fill="#111">EQ</text>
<text transform="translate(692.2,427) rotate(-90)" text-anchor="middle" font-size="16" fill="#111">EQ</text>
<text transform="translate(692.2,459) rotate(-90)" text-anchor="middle" font-size="16" fill="#111">EQ</text>
<text transform="translate(692.2,491) rotate(-90)" text-anchor="middle" font-size="16" fill="#111">EQ</text>
<text transform="translate(692.2,522.8) rotate(-90)" text-anchor="middle" font-size="16" fill="#111">EQ</text>
<rect x="765.4" y="589.7" width="24" height="19" fill="#fff"/>
<text x="765.4" y="604.7" font-size="16" fill="#111">EQ</text>
<rect x="781.6" y="589.7" width="24" height="19" fill="#fff"/>
<text x="781.6" y="604.7" font-size="16" fill="#111">EQ</text>
<rect x="797.8" y="589.7" width="24" height="19" fill="#fff"/>
<text x="797.8" y="604.7" font-size="16" fill="#111">EQ</text>
<rect x="814" y="589.7" width="24" height="19" fill="#fff"/>
<text x="814" y="604.7" font-size="16" fill="#111">EQ</text>
<rect x="746.2" y="757.9" width="111" height="20" fill="#fff"/>
<text x="746.2" y="773.9" font-size="17" fill="#111">Jag W = 0' - 4&quot;</text></svg>
<!-- dialog -->
<div class="a" style="left:843px;top:117px;width:685px;height:549px;background:#f0f0f0;border:1px solid #8a8a8a;box-shadow:2px 4px 12px rgba(0,0,0,0.28)"></div>
<div class="a" style="left:844px;top:118px;width:683px;height:25px;background:#fff"></div>
<div class="t" style="left:851px;top:124px;font-size:10.4px;color:#222"><span class="n" style="transform:scaleX(.9)">Family Types</span></div>
<svg style="left:0;top:0" width="1536" height="827"><path d="M1510.5 125.5 L1519 134 M1519 125.5 L1510.5 134" stroke="#222" stroke-width="1.2"/></svg>
<div class="t" style="left:853px;top:157px;font-size:10.4px;color:#222"><span class="n" style="transform:scaleX(.86)">Type name:</span></div>
<div class="a" style="left:912px;top:154px;width:528px;height:17px;background:#e3e3e3;border:1px solid #adadad"></div>
<div class="t" style="left:915px;top:157px;font-size:9.5px;color:#1a1a1a">3" Scale</div>
<svg style="left:0;top:0" width="1536" height="827">
<path d="M1429 160 L1432.5 163.5 L1436 160" fill="none" stroke="#444" stroke-width="1"/>
<g fill="#fff" stroke="#666" stroke-width="1">
<path d="M1450.5 159.5 h6 l3 3 v7 h-9 z"/>
<rect x="1473.5" y="157.5" width="13" height="10" fill="#f6f6f6" stroke="#666"/>
<path d="M1501.5 159.5 h6 l3 3 v7 h-9 z"/>
</g>
<circle cx="1451" cy="157.5" r="1.8" fill="#e33"/>
<text x="1475" y="166" font-family="Liberation Sans" font-size="9" font-weight="bold" fill="#2a6fd0">AI</text>
<path d="M1498.5 155.5 l4 4 M1502.5 155.5 l-4 4" stroke="#e22" stroke-width="1.6"/>
</svg>
<div class="a" style="left:853px;top:181px;width:666px;height:17px;background:#fff;border:1px solid #a2a2a2"></div>
<div class="t" style="left:856px;top:184px;font-size:9.5px;color:#4a4a4a;letter-spacing:-0.3px">Search parameters</div>
<svg style="left:0;top:0" width="1536" height="827"><circle cx="1508" cy="188" r="4" fill="none" stroke="#555" stroke-width="1.2"/><path d="M1511 191 L1515 195" stroke="#444" stroke-width="2"/></svg>
<!-- table -->
<div class="a" style="left:854px;top:205px;width:663px;height:381px;background:#fff;border-left:1px solid #666"></div>
<div class="a" style="left:855px;top:206px;width:661px;height:19px;background:#efefef;border-bottom:1px solid #444;border-top:1px solid #444;border-right:1px solid #444"></div>
<div class="a" style="left:1057px;top:206px;width:1px;height:19px;background:#444"></div>
<div class="a" style="left:1471px;top:206px;width:1px;height:19px;background:#444"></div>
<div class="t" style="left:935px;top:210px;font-size:10px;color:#222">Parameter</div>
<div class="t" style="left:1148px;top:210px;font-size:10px;color:#222">Value</div>
<div class="t" style="left:1348px;top:210px;font-size:10px;color:#222">Formula</div>
<div class="t" style="left:1484px;top:210px;font-size:10px;color:#222">Lock</div>

<svg style="left:0;top:0" width="1536" height="827"><g stroke="#b5b5b5" stroke-dasharray="1 1"><line x1="1057.5" y1="226" x2="1057.5" y2="580"/><line x1="1471.5" y1="226" x2="1471.5" y2="580"/><line x1="1515.5" y1="226" x2="1515.5" y2="580"/><line x1="855" y1="579.5" x2="1516" y2="579.5"/></g></svg>
<div class="dh" style="top:227px;height:16px;line-height:16px">Constraints</div>
<div class="dr" style="top:243px"><span style="left:2px">Scale</span></div>
<div class="dh" style="top:261px;height:15px;line-height:15px">Graphics</div>
<div class="dr" style="top:276px"><span style="left:2px">Single (default)</span></div>
<div class="dr g" style="top:291px"><span style="left:2px">Double (default)</span></div>
<div class="t" style="left:1270px;top:292px;font-size:10px;color:#1a1a1a;letter-spacing:-0.15px">not(Single)</div>
<div class="dh" style="top:309px;height:16px;line-height:16px">Dimensions</div>
<div class="dr" style="top:325px"><span style="left:2px">Right (default)</span></div>
<div class="t" style="left:1059px;top:326px;font-size:10px;color:#1a1a1a">2'  0&quot;</div>
<div class="dr" style="top:340px"><span style="left:2px">Masking Depth Double (default)</span></div>
<div class="t" style="left:1059px;top:341px;font-size:10px;color:#1a1a1a">0'  4&quot;</div>
<div class="dr" style="top:355px"><span style="left:2px">Left (default)</span></div>
<div class="t" style="left:1059px;top:356px;font-size:10px;color:#1a1a1a">2'  0&quot;</div>
<div class="dr g" style="top:370px"><span style="left:2px">Jag Width</span></div>
<div class="t g" style="left:1059px;top:371px;font-size:10px;color:#9a9a9a">0'  1&quot;</div>
<div class="t" style="left:1270px;top:371px;font-size:10px;color:#1a1a1a;letter-spacing:-0.15px">0'  1&quot;</div>
<div class="dr g" style="top:385px"><span style="left:2px">Jag Depth</span></div>
<div class="t g" style="left:1059px;top:386px;font-size:10px;color:#9a9a9a">0'  1&quot;</div>
<div class="t" style="left:1270px;top:386px;font-size:10px;color:#1a1a1a;letter-spacing:-0.15px">0'  1&quot;</div>
<div class="dr" style="top:400px"><span style="left:2px">Masking depth (default)</span></div>
<div class="t" style="left:1059px;top:401px;font-size:10px;color:#1a1a1a">2'  0&quot;</div>
<div class="dh" style="top:418px;height:15px;line-height:15px">Other</div>
<div class="dr" style="top:433px"><span style="left:2px">Scale Factor</span></div>
<div class="t" style="left:1059px;top:434px;font-size:10px;color:#1a1a1a">4.000000</div>
<div class="t" style="left:1270px;top:434px;font-size:10px;color:#1a1a1a;letter-spacing:-0.15px">1' / Scale</div>
<div class="dr g" style="top:449px"><span style="left:2px">Jag D</span></div>
<div class="t g" style="left:1059px;top:450px;font-size:10px;color:#9a9a9a">0'  4&quot;</div>
<div class="t" style="left:1270px;top:450px;font-size:10px;color:#1a1a1a;letter-spacing:-0.15px">Scale Factor * Jag Depth</div>
<div class="dr g" style="top:464px"><span style="left:2px">Jag W</span></div>
<div class="t g" style="left:1059px;top:465px;font-size:10px;color:#9a9a9a">0'  4&quot;</div>
<div class="t" style="left:1270px;top:465px;font-size:10px;color:#1a1a1a;letter-spacing:-0.15px">Scale Factor * Jag Width</div>
<div class="dh" style="top:481px;height:16px;line-height:16px">Identity Data</div>
<div class="a" style="left:1057px;top:243px;width:210px;height:15px;border:1.5px solid #222;background:#fff"></div>
<div class="t" style="left:1059px;top:244px;font-size:10px;color:#1a1a1a">0'  3"</div>
<svg style="left:0;top:0" width="1536" height="827"><path d="M1505 235.0 l3 -2.5 l3 2.5 M1505 238.0 l3 -2.5 l3 2.5" fill="none" stroke="#111" stroke-width="1.2"/>
<rect x="1474.5" y="246.5" width="10" height="10" fill="#fff" stroke="#555"/>
<path d="M1505 268.5 l3 -2.5 l3 2.5 M1505 271.5 l3 -2.5 l3 2.5" fill="none" stroke="#111" stroke-width="1.2"/>
<rect x="1060.5" y="279.5" width="10" height="10" fill="#fff" stroke="#444"/><path d="M1062.5 284.5 l2.5 2.5 l4.5 -5" fill="none" stroke="#333" stroke-width="1.2"/>
<rect x="1060.5" y="294.5" width="10" height="10" fill="#fff" stroke="#d8d8d8"/>
<path d="M1505 317.0 l3 -2.5 l3 2.5 M1505 320.0 l3 -2.5 l3 2.5" fill="none" stroke="#111" stroke-width="1.2"/>
<rect x="1474.5" y="328.5" width="10" height="10" fill="#fff" stroke="#555"/>
<rect x="1474.5" y="343.5" width="10" height="10" fill="#fff" stroke="#555"/>
<rect x="1474.5" y="358.5" width="10" height="10" fill="#fff" stroke="#555"/>
<rect x="1474.5" y="373.5" width="10" height="10" fill="#fff" stroke="#555"/>
<rect x="1474.5" y="388.5" width="10" height="10" fill="#fff" stroke="#555"/>
<rect x="1474.5" y="403.5" width="10" height="10" fill="#fff" stroke="#555"/>
<path d="M1505 425.5 l3 -2.5 l3 2.5 M1505 428.5 l3 -2.5 l3 2.5" fill="none" stroke="#111" stroke-width="1.2"/>
<rect x="1474.5" y="452.5" width="10" height="10" fill="#fff" stroke="#555"/>
<rect x="1474.5" y="467.5" width="10" height="10" fill="#fff" stroke="#555"/>
<path d="M1505 486.5 l3 2.5 l3 -2.5 M1505 489.5 l3 2.5 l3 -2.5" fill="none" stroke="#111" stroke-width="1.2"/></svg>

<!-- red highlight -->
<div class="a" style="left:843px;top:200px;width:424px;height:387px;border:6.5px solid #ec1c24"></div>
<!-- h scrollbar -->
<div class="a" style="left:855px;top:587px;width:661px;height:9px;background:#f0f0f0"></div>
<div class="a" style="left:869px;top:587px;width:507px;height:9px;background:#c9c9c9"></div><div class="a" style="left:854px;top:586px;width:1px;height:10px;background:#777"></div>
<svg style="left:0;top:0" width="1536" height="827">
<path d="M862 588 l-3 3 l3 3" fill="none" stroke="#444" stroke-width="1.2"/>
<path d="M1508.5 588 l3 3 l-3 3" fill="none" stroke="#444" stroke-width="1.2"/>
<!-- toolbar icons -->
<g fill="none" stroke="#555" stroke-width="1">
<path d="M857.5 620.5 l1 -4 l9 -9 l3 3 l-9 9 z" fill="#f4f4f4" stroke="#777"/><path d="M858.5 616.5 l3 3" stroke="#d08060"/>
<path d="M884.5 610.5 h6 l3 3 v7 h-9 z" fill="#fff"/>
<path d="M909.5 610.5 h6 l3 3 v7 h-9 z" fill="#fff"/>
<path d="M936 620 v-11 M933 612 l3 -3 l3 3" stroke="#3e66a8" stroke-width="1.5"/>
<path d="M941 610 h5 M941 614 h5 M941 618 h5 M941 609 v10" stroke="#a0b0c8"/>
<path d="M961 608 v11 M958 616 l3 3 l3 -3" stroke="#555" stroke-width="1.5"/>
<path d="M966 610 h5 M966 614 h5 M966 618 h5 M966 609 v10" stroke="#a0b0c8"/>
<path d="M1002 608 v11 M999 616 l3 3 l3 -3" stroke="#333" stroke-width="1.3"/>
<path d="M1027 619 v-11 M1024 611 l3 -3 l3 3" stroke="#333" stroke-width="1.3"/>
</g>
<circle cx="885" cy="609" r="1.8" fill="#e33"/>
<path d="M907.5 607 l4 4 M911.5 607 l-4 4" stroke="#e22" stroke-width="1.5"/>
<text x="994" y="614" font-family="Liberation Sans" font-size="6.5" font-weight="bold" fill="#3a6ab0">A</text>
<text x="994" y="621" font-family="Liberation Sans" font-size="6.5" font-weight="bold" fill="#3a6ab0">Z</text>
<text x="1019" y="614" font-family="Liberation Sans" font-size="6.5" font-weight="bold" fill="#3a6ab0">A</text>
<text x="1019" y="621" font-family="Liberation Sans" font-size="6.5" font-weight="bold" fill="#3a6ab0">Z</text>
</svg>
<div class="t" style="left:853px;top:635px;font-size:9.5px;color:#1f66c8;text-decoration:underline;letter-spacing:-0.25px">How do I manage family types?</div>
<div class="a" style="left:1413px;top:606px;width:104px;height:18px;background:#e1e1e1;border:1px solid #adadad"></div>
<div class="t" style="left:1418px;top:609px;font-size:9.5px;color:#222;letter-spacing:-0.15px">Manage Lookup Tables</div>
<div class="a" style="left:1313px;top:636px;width:64px;height:19px;background:#e1e1e1;border:2px solid #2f7bd0"></div>
<div class="t" style="left:1338px;top:639px;font-size:10px;color:#222">OK</div>
<div class="a" style="left:1383px;top:636px;width:64px;height:19px;background:#e1e1e1;border:1px solid #adadad"></div>
<div class="t" style="left:1401px;top:639px;font-size:10px;color:#222">Cancel</div>
<div class="a" style="left:1453px;top:636px;width:64px;height:19px;background:#e1e1e1;border:1px solid #adadad"></div>
<div class="t" style="left:1473px;top:639px;font-size:10px;color:#222">Apply</div>
<svg style="left:0;top:0" width="1536" height="827"><g fill="#b0b0b0"><rect x="1522" y="656" width="1.2" height="1.2"/><rect x="1522" y="659" width="1.2" height="1.2"/><rect x="1519" y="659" width="1.2" height="1.2"/><rect x="1522" y="662" width="1.2" height="1.2"/><rect x="1519" y="662" width="1.2" height="1.2"/><rect x="1516" y="662" width="1.2" height="1.2"/></g></svg>

</body></html>
